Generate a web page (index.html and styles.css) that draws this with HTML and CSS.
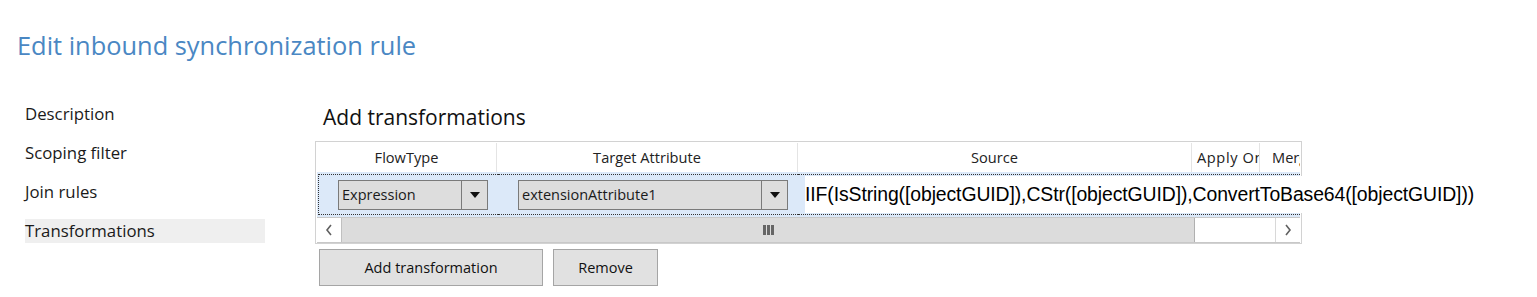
FILE: index.html
```html
<!DOCTYPE html>
<html lang="en">

<head>
    <meta charset="UTF-8">
    <meta name="viewport" content="width=device-width, initial-scale=1.0">
    <title>Edit inbound synchronization rule</title>
    <link rel="stylesheet" href="styles.css">
</head>

<body>

    <h1 class="title">Edit inbound synchronization rule</h1>

    <div class="main">
        <ul class="nav">
            <li class="nav-item">Description</li>
            <li class="nav-item">Scoping filter</li>
            <li class="nav-item">Join rules</li>
            <li class="nav-item selected">Transformations</li>
        </ul>

        <div class="content">
            <h2 class="section">Add transformations</h2>

            <div class="grid">
                <div class="grid-head">
                    <div class="head-cell col-flow">FlowType</div>
                    <div class="head-cell col-target">Target Attribute</div>
                    <div class="head-cell col-source">Source</div>
                    <div class="head-cell col-apply left">Apply On</div>
                    <div class="head-cell col-merge left wide">Merge Type</div>
                </div>

                <div class="grid-row">
                    <div class="cell col-flow">
                        <div class="combo combo-flow">
                            <span class="combo-text">Expression</span>
                            <span class="combo-btn"><span class="caret"></span></span>
                        </div>
                    </div>
                    <div class="cell col-target">
                        <div class="combo combo-target">
                            <span class="combo-text">extensionAttribute1</span>
                            <span class="combo-btn"><span class="caret"></span></span>
                        </div>
                    </div>
                    <div class="cell col-rest">
                        <div class="source">IIF(IsString([objectGUID]),CStr([objectGUID]),ConvertToBase64([objectGUID]))</div>
                    </div>
                </div>

                <div class="hscroll">
                    <div class="scroll-btn">
                        <svg width="8" height="12" viewBox="0 0 8 12"><path d="M6 1 L2 6 L6 11" fill="none" stroke="#606060" stroke-width="1.6"/></svg>
                    </div>
                    <div class="thumb">
                        <span class="grip"></span><span class="grip"></span><span class="grip"></span>
                    </div>
                    <div class="track"></div>
                    <div class="scroll-btn right">
                        <svg width="8" height="12" viewBox="0 0 8 12"><path d="M2 1 L6 6 L2 11" fill="none" stroke="#606060" stroke-width="1.6"/></svg>
                    </div>
                </div>
            </div>

            <div class="actions">
                <button class="btn btn-add">Add transformation</button>
                <button class="btn btn-remove">Remove</button>
            </div>
        </div>
    </div>

</body>

</html>
```

FILE: styles.css
```css
body {
    margin: 0;
    background: #fff;
    font-family: 'Open Sans', 'Noto Sans', sans-serif;
    color: #1a1a1a;
}

.title {
    margin: 0;
    padding: 30px 0 0 17px;
    height: 30px;
    line-height: 30px;
    font-size: 25.4px;
    font-weight: normal;
    color: #4a87c3;
}

.main {
    display: flex;
    padding-top: 42px;
}

.nav {
    list-style: none;
    margin: 0 0 0 25px;
    padding: 0;
    width: 240px;
}

.nav-item {
    height: 24px;
    line-height: 24px;
    margin-bottom: 15px;
    font-size: 16.8px;
}

.nav-item.selected {
    background: #efefef;
}

.content {
    margin-left: 50px;
}

.section {
    margin: 3px 0 0 8px;
    height: 24px;
    line-height: 24px;
    font-size: 21px;
    font-weight: normal;
    color: #111;
}

.grid {
    margin-top: 12px;
    width: 983px;
    border: 1px solid #d2d2d2;
    padding: 1px 1px 0 1px;
}

.grid-head {
    display: flex;
    height: 29px;
    overflow: hidden;
    font-size: 14.6px;
    color: #222;
}

.head-cell {
    flex: none;
    line-height: 29px;
    text-align: center;
    white-space: nowrap;
    overflow: hidden;
    border-right: 1px solid #e4e4e4;
}

.head-cell.left {
    text-align: left;
    padding-left: 5px;
}

.col-apply.left {
    letter-spacing: 0.6px;
}

.head-cell.wide {
    padding-left: 12px;
    border-right: none;
}

.col-flow { width: 179px; }
.col-target { width: 300px; }
.col-source { width: 393px; }
.col-apply { width: 62px; }
.col-merge { width: 200px; }

.grid-row {
    display: flex;
    height: 45px;
    background: #dce9f9;
}

.grid-row .cell {
    display: flex;
    align-items: center;
    border-top: 1px dotted #333;
    border-bottom: 1px dotted #333;
    margin: 2px 0;
}

.grid-row .col-flow {
    border-left: 1px dotted #333;
    margin-left: 1px;
    width: 179px;
}

.grid-row .col-rest {
    flex: 1;
    min-width: 0;
}

.combo {
    display: flex;
    height: 28px;
    margin-left: 19px;
    background: #dddddd;
    border: 1px solid #7a7a7a;
    font-size: 14.5px;
}

.combo-flow { width: 148px; }
.combo-target { width: 268px; margin-left: 20px; }

.combo-text {
    flex: 1;
    line-height: 28px;
    padding-left: 3px;
    white-space: nowrap;
}

.combo-btn {
    width: 25px;
    border-left: 1px solid #7a7a7a;
    display: flex;
    align-items: center;
    justify-content: center;
}

.caret {
    width: 0;
    height: 0;
    border-left: 5px solid transparent;
    border-right: 5px solid transparent;
    border-top: 6px solid #111;
}

.source {
    margin-left: 7px;
    flex: 1;
    height: 37px;
    line-height: 37px;
    background: #fff;
    font-family: 'Liberation Sans', Arial, sans-serif;
    font-size: 19.4px;
    letter-spacing: -0.1px;
    color: #000;
    white-space: nowrap;
}

.hscroll {
    display: flex;
    height: 24px;
    border-top: 1px solid #c8c8c8;
    border-bottom: 1px solid #c8c8c8;
}

.scroll-btn {
    width: 24px;
    display: flex;
    align-items: center;
    justify-content: center;
    background: #fff;
}

.scroll-btn.right {
    border-left: 1px solid #d8d8d8;
}

.thumb {
    width: 852px;
    background: #dcdcdc;
    border-left: 1px solid #c0c0c0;
    border-right: 1px solid #b0b0b0;
    display: flex;
    align-items: center;
    justify-content: center;
    gap: 1px;
}

.grip {
    width: 3px;
    height: 10px;
    background: #666;
}

.track {
    flex: 1;
    background: #fff;
}

.actions {
    display: flex;
    gap: 10px;
    margin: 5px 0 0 4px;
}

.btn {
    height: 37px;
    background: #e1e1e1;
    border: 1px solid #a5a5a5;
    font-family: 'Open Sans', 'Noto Sans', sans-serif;
    font-size: 14.5px;
    color: #111;
    padding: 0;
}

.btn-add { width: 224px; }
.btn-remove { width: 105px; }
```
